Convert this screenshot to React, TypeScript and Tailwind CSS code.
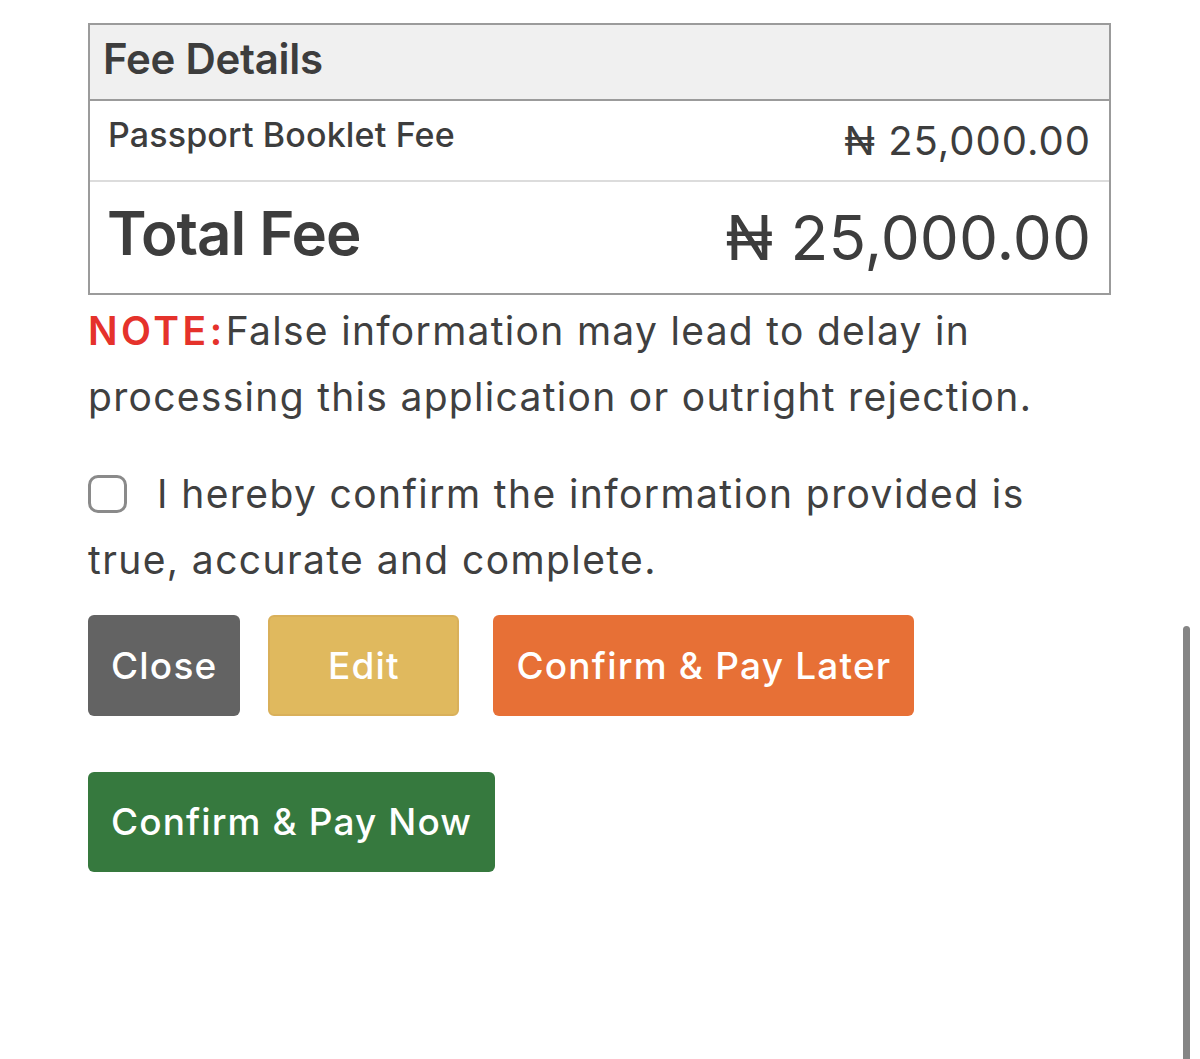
import React from 'react';

const font = { fontFamily: 'Inter, "Noto Sans", "Liberation Sans", sans-serif' };

function FeeTable() {
  return (
    <div className="border-2 border-[#9b9b9b] text-[#3d3d3d]">
      {/* Header */}
      <div className="h-[76px] flex items-center pl-[13px] pb-[6px] bg-[#f0f0f0] border-b-2 border-[#9b9b9b]">
        <span className="text-[42px] leading-none font-semibold tracking-[-0.3px]">Fee Details</span>
      </div>

      {/* Line item */}
      <div className="h-[81px] flex items-center justify-between pl-[18px] pr-[18px] border-b-2 border-[#dcdcdc]">
        <span className="text-[34px] leading-none font-medium pb-[12px] tracking-[0.15px]">Passport Booklet Fee</span>
        <span className="text-[40px] leading-none font-normal tracking-[1px]">₦ 25,000.00</span>
      </div>

      {/* Total */}
      <div className="h-[111px] flex items-center justify-between pl-[17px] pr-[18px]">
        <span className="text-[60px] leading-none font-semibold pb-[10px] tracking-[-1px]">Total Fee</span>
        <span className="text-[62px] leading-none font-normal">₦ 25,000.00</span>
      </div>
    </div>
  );
}

export default function App() {
  return (
    <div className="relative min-h-[1059px] bg-white overflow-hidden" style={font}>
      <div className="ml-[88px] w-[1023px] pt-[23px]">
        <FeeTable />

        {/* Note */}
        <p className="mt-[3px] text-[39px] leading-[66px] text-[#404040] tracking-[1.3px]">
          <span className="font-semibold text-[#e5322b] tracking-[3.5px]">NOTE:</span>
          <span>False information may lead to delay in processing this application or outright rejection.</span>
        </p>

        {/* Confirmation */}
        <div className="mt-[31px] text-[39px] leading-[66px] text-[#404040] tracking-[1.4px]">
          <span className="inline-block align-middle w-[39px] h-[38px] mr-[30px] -mt-[6px] border-[3px] border-[#8a8a8a] rounded-[10px] bg-white" />
          <span>I hereby confirm the information provided is true, accurate and complete.</span>
        </div>

        {/* Actions */}
        <div className="mt-[22px] flex items-center">
          <button className="h-[101px] px-[23px] rounded-[6px] bg-[#636363] text-white text-[37px] font-medium tracking-[1.2px]">
            Close
          </button>
          <button className="ml-[28px] h-[101px] w-[191px] rounded-[6px] bg-[#e0b95e] border-2 border-[#d9b05a] text-white text-[37px] font-medium tracking-[1.2px]">
            Edit
          </button>
          <button className="ml-[34px] h-[101px] px-[23px] rounded-[6px] bg-[#e77036] text-white text-[37px] font-medium tracking-[1.2px]">
            Confirm &amp; Pay Later
          </button>
        </div>

        <div className="mt-[56px] flex">
          <button className="h-[100px] px-[23px] rounded-[6px] bg-[#36793e] text-white text-[37px] font-medium tracking-[1.1px]">
            Confirm &amp; Pay Now
          </button>
        </div>
      </div>

      {/* iOS scroll indicator */}
      <div className="absolute left-[1183px] top-[626px] w-[7px] h-[440px] rounded-full bg-[#858585]" />
    </div>
  );
}
